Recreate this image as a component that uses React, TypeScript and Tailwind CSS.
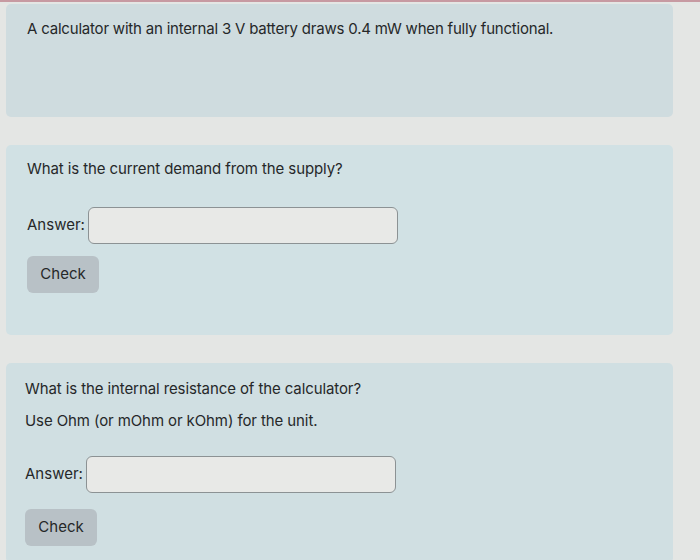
const font = { fontFamily: '"Inter", "Liberation Sans", sans-serif' };

function AnswerRow() {
  return (
    <div className="flex items-center">
      <label className="text-[15px] text-[#262829] mr-[3px]">Answer:</label>
      <input
        type="text"
        className="w-[310px] h-[37px] rounded-[6px] border border-[#8c9294] bg-[#e8e9e7] outline-none"
      />
    </div>
  );
}

function CheckButton() {
  return (
    <button className="w-[72px] h-[37px] rounded-[6px] bg-[#b8c1c6] text-[15px] text-[#262829]">
      Check
    </button>
  );
}

export default function App() {
  return (
    <div className="w-[700px] h-[560px] overflow-hidden bg-[#e4e6e4] text-[#262829]" style={font}>
      <div className="h-[2px] bg-[#c79aa2]" />
      <div className="pl-[6px] pr-[27px] pt-[2px] flex flex-col">
        <section className="h-[113px] rounded-[5px] bg-[#cfdcdf] px-[21px] pt-[14px]">
          <p className="text-[15px] tracking-[-0.2px]">
            A calculator with an internal 3 V battery draws 0.4 mW when fully functional.
          </p>
        </section>

        <section className="mt-[28px] h-[190px] rounded-[5px] bg-[#d1e1e4] px-[21px] pt-[13px]">
          <p className="text-[15px] tracking-[-0.1px]">What is the current demand from the supply?</p>
          <div className="mt-[26px]">
            <AnswerRow />
          </div>
          <div className="mt-[12px]">
            <CheckButton />
          </div>
        </section>

        <section className="mt-[28px] h-[200px] rounded-[5px] bg-[#d0dfe2] pl-[19px] pt-[15px]">
          <p className="text-[15px] tracking-[-0.1px]">What is the internal resistance of the calculator?</p>
          <p className="mt-[9px] text-[15px] tracking-[-0.1px]">Use Ohm (or mOhm or kOhm) for the unit.</p>
          <div className="mt-[24px]">
            <AnswerRow />
          </div>
          <div className="mt-[16px]">
            <CheckButton />
          </div>
        </section>
      </div>
    </div>
  );
}
